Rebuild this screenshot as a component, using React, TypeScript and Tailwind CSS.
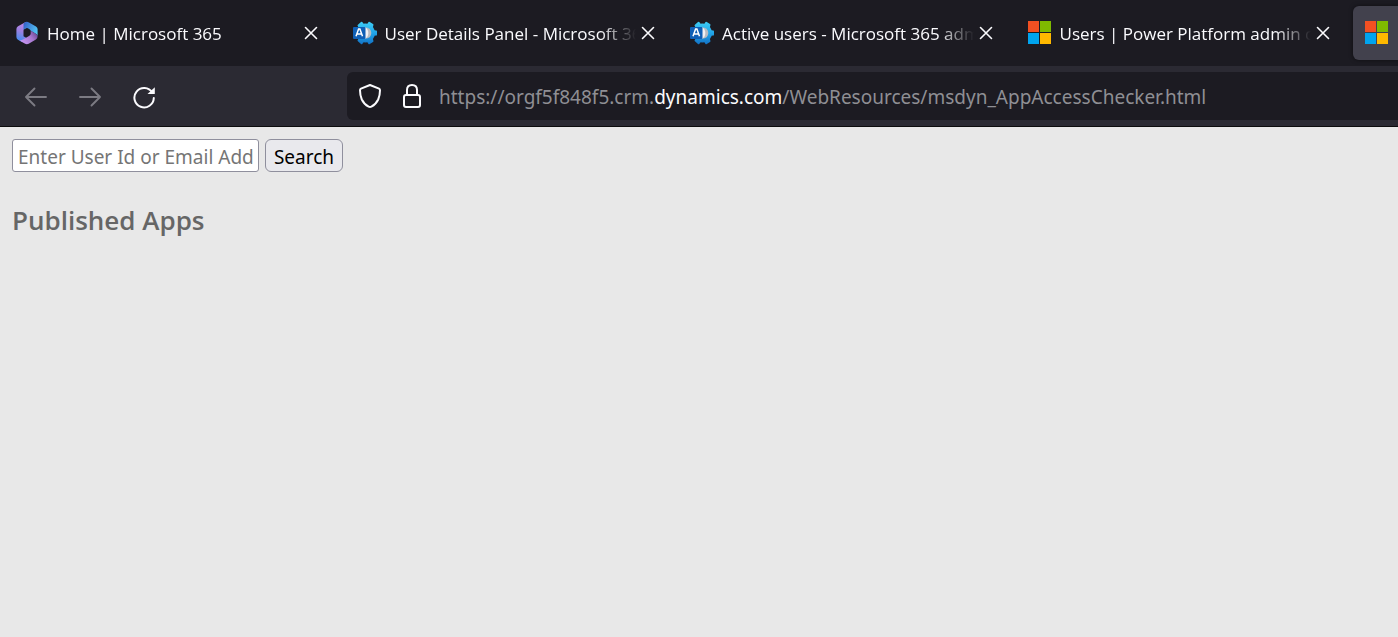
import type { ReactNode } from "react";

function Microsoft365Icon() {
  return (
    <svg viewBox="0 0 24 24" className="size-6 shrink-0" aria-hidden="true">
      <defs>
        <linearGradient id="m-left" x1="10" y1="1" x2="4" y2="20" gradientUnits="userSpaceOnUse">
          <stop offset="0" stopColor="#c48bea" />
          <stop offset="0.5" stopColor="#9a80e0" />
          <stop offset="1" stopColor="#3f8cee" />
        </linearGradient>
        <linearGradient id="m-top" x1="8" y1="5" x2="22" y2="12" gradientUnits="userSpaceOnUse">
          <stop offset="0" stopColor="#3565c8" />
          <stop offset="1" stopColor="#55c9f7" />
        </linearGradient>
        <linearGradient id="m-bottom" x1="8" y1="22" x2="21" y2="12" gradientUnits="userSpaceOnUse">
          <stop offset="0" stopColor="#c594f2" />
          <stop offset="0.6" stopColor="#a678cf" />
          <stop offset="1" stopColor="#6d4a98" />
        </linearGradient>
      </defs>
      <path d="M10.800.9 3 5.200Q1.400 6.200 1.400 8v8q0 1.800 1.500 2.700l4.500 2.500 5-3.700-3.900-2.300V9.500q0-1.100 1-1.700L13 6V1Z" fill="url(#m-left)" />
      <path d="M8.500 3.200Q8.500 2 9.600 1.500 11.800.2 14 1.400l7 4q1.600 1 1.600 2.700v7.200q-.2-1.700-1.800-2.600l-5.100-2.900Q15.500 8.700 14.500 8.200L12.800 7.200q-.8-.4-1.600 0L8.500 8.800Z" fill="url(#m-top)" />
      <path d="M15.700 9.800l5.100 2.900q1.800 1.100 1.800 2.900-.1 2-1.700 3l-7.200 4.100q-1.800.9-3.600 0l-6-3.400q2 .4 4-.7l6.300-3.800q1.300-.8 1.300-2.300Z" fill="url(#m-bottom)" />
    </svg>
  );
}

function AdminIcon() {
  return (
    <svg viewBox="0 0 24 24" className="size-6 shrink-0" aria-hidden="true">
      <defs>
        <linearGradient id="gear" x1="0" y1="0" x2="0" y2="24" gradientUnits="userSpaceOnUse">
          <stop offset="0" stopColor="#3fd0f6" />
          <stop offset="0.5" stopColor="#22a5e8" />
          <stop offset="1" stopColor="#116fc4" />
        </linearGradient>
      </defs>
      <g fill="url(#gear)">
        <path d="M4.500 6.200q3-3.700 7.900-3.700t8 4.300q1.600 2.300 1.600 5.200t-1.600 5.200q-3.100 4.300-8 4.300t-7.900-3.700Z" />
        <path d="M4.600 4.800Q4.300 4.200 4.900 3.800L8 1q.7-.6 1.300 0l1.700 2.500-4.500 4Z" />
        <path d="M14 3.500 15.500 1q.6-.6 1.300 0l3.200 2q.7.500.4 1.200L19.600 7.200Z" />
        <path d="m20.500 9.200 2.800.2q.7.100.7.900v3.400q0 .8-.7.900l-2.800.2Z" />
        <path d="M14 20.500l1.500 2.500q.6.600 1.300 0l3.200-2q.7-.5.4-1.200l-.8-3Z" />
        <path d="M4.600 19.200q-.3.600.3 1L8 23q.7.600 1.300 0l1.700-2.500-4.500-4Z" />
      </g>
      <path d="M11.500 6.200q6.800.3 6.800 5.800t-6.800 5.800Z" fill="#b9bcc2" />
      <path d="M11.500 6.200q3.800 1 3.800 5.800t-3.800 5.800Z" fill="#f1f1f3" />
      <rect x="0" y="6" width="12.500" height="12" rx="1" fill="#0f5fb5" />
      <path d="m3 15.200 2.600-7.200h1.300l2.600 7.200M4.200 12.900h4.200" fill="none" stroke="#fff" strokeWidth="1.500" />
    </svg>
  );
}

function MicrosoftIcon() {
  return (
    <svg viewBox="0 0 24 24" className="size-6 shrink-0" aria-hidden="true">
      <path fill="#f25022" d="M0 0h11v11H0z" />
      <path fill="#7fba00" d="M12 0h11v11H12z" />
      <path fill="#00a4ef" d="M0 12h11v11H0z" />
      <path fill="#ffb900" d="M12 12h11v11H12z" />
    </svg>
  );
}

function Tab({ icon, title }: { icon: ReactNode; title: string }) {
  return (
    <div className="flex min-w-0 flex-1 items-center pr-[19px] pl-[15px]">
      {icon}
      <span className="ml-2 min-w-0 flex-1 overflow-hidden mask-r-from-[calc(100%-36px)] mask-r-to-100% pt-px text-[17px] leading-6 whitespace-nowrap">
        {title}
      </span>
      <button type="button" aria-label={"Close " + title} className="ml-1 grid size-4 shrink-0 place-items-center">
        <svg viewBox="0 0 16 16" className="size-4" fill="none" stroke="#fbfbfe" strokeWidth="1.600" strokeLinecap="round">
          <path d="m2.500 2.500 11 11m0-11-11 11" />
        </svg>
      </button>
    </div>
  );
}

export default function App() {
  return (
    <div className="flex min-h-screen flex-col overflow-x-hidden bg-[#e8e8e8] font-['Open_Sans','Noto_Sans',sans-serif]">
      <header className="text-[#fbfbfe]">
        <nav aria-label="Browser tabs" className="flex h-[66px] bg-[#1c1b22]">
          <Tab icon={<Microsoft365Icon />} title="Home | Microsoft 365" />
          <Tab icon={<AdminIcon />} title="User Details Panel - Microsoft 365 admin center" />
          <Tab icon={<AdminIcon />} title="Active users - Microsoft 365 admin center" />
          <Tab icon={<MicrosoftIcon />} title="Users | Power Platform admin center" />
          <button
            type="button"
            aria-label="Current tab"
            className="my-1.5 ml-[3px] flex w-[45px] shrink-0 items-center rounded-l-md bg-[#42414d] pl-3 shadow-[0_0_4px_rgba(0,0,0,0.5)]"
          >
            <MicrosoftIcon />
          </button>
        </nav>
        <div className="flex h-[61px] border-b border-[#0c0c0d] bg-[#2b2a33]">
          <div className="flex w-[347px] shrink-0 items-center gap-[30px] pt-0.5 pl-6">
            <button type="button" aria-label="Back" disabled>
              <svg viewBox="0 0 24 24" className="size-6" fill="none" stroke="#7c7b83" strokeWidth="1.900" strokeLinecap="round" strokeLinejoin="round">
                <path d="M22 12H2m8.500-8.500L2 12l8.500 8.500" />
              </svg>
            </button>
            <button type="button" aria-label="Forward" disabled>
              <svg viewBox="0 0 24 24" className="size-6" fill="none" stroke="#7c7b83" strokeWidth="1.900" strokeLinecap="round" strokeLinejoin="round">
                <path d="M2 12h20m-8.500-8.500L22 12l-8.500 8.500" />
              </svg>
            </button>
            <button type="button" aria-label="Reload">
              <svg viewBox="0 0 24 24" className="size-6" fill="none" stroke="#fbfbfe" strokeWidth="2" strokeLinecap="round">
                <path d="M20.300 7.500A9.700 9.700 0 1 0 21.800 13" />
                <path d="M22.800 2.200v6.300q0 .5-.5.500H15.500Z" fill="#fbfbfe" stroke="none" />
              </svg>
            </button>
          </div>
          <div className="my-1.5 flex min-w-0 flex-1 items-center rounded-l-md bg-[#1c1b22] pl-[11px]">
            <svg viewBox="0 0 24 26" className="h-[26px] w-6 shrink-0" fill="none" stroke="#fbfbfe" strokeWidth="2" strokeLinejoin="round" aria-hidden="true">
              <path d="M12 2 21 5.700q1 .5 1 1.500 0 5-1.800 9.300-2.200 4.800-6.800 7.100-1.400.7-2.800 0-4.600-2.300-6.800-7.100Q2 12.200 2 7.200q0-1 1-1.500Z" />
            </svg>
            <svg viewBox="0 0 20 26" className="ml-5 h-[26px] w-5 shrink-0" fill="none" stroke="#fbfbfe" strokeWidth="2" aria-hidden="true">
              <rect x="2" y="12" width="16" height="12" rx="2" />
              <path d="M5 12V7q0-5 5-5t5 5v5" />
            </svg>
            <div className="ml-[17px] pt-0.5 font-['Noto_Sans',sans-serif] text-[19px] leading-7 whitespace-nowrap text-[#8f8f94]">
              https://orgf5f848f5.crm.<span className="text-[#fbfbfe]">dynamics.com</span>/WebResources/msdyn_AppAccessChecker.html
            </div>
          </div>
        </div>
      </header>
      <main className="px-3 pt-3">
        <form className="flex gap-1.5" onSubmit={(event) => event.preventDefault()}>
          <input
            type="text"
            aria-label="User Id or Email Address"
            placeholder="Enter User Id or Email Address"
            className="h-[33px] w-[247px] rounded-[3px] border border-[#8f8f9d] bg-white px-[5px] pt-0.5 font-['Noto_Sans',sans-serif] text-[19px] text-black placeholder:text-[#757575]"
          />
          <button
            type="submit"
            className="h-[33px] w-[78px] rounded-md border border-[#8f8f9d] bg-[#e9e9ed] pt-0.5 font-['Noto_Sans',sans-serif] text-[19px] leading-6 text-black"
          >
            Search
          </button>
        </form>
        <h1 className="mt-[30px] text-[26px] leading-9 font-semibold text-[#666666]">Published Apps</h1>
      </main>
    </div>
  );
}
